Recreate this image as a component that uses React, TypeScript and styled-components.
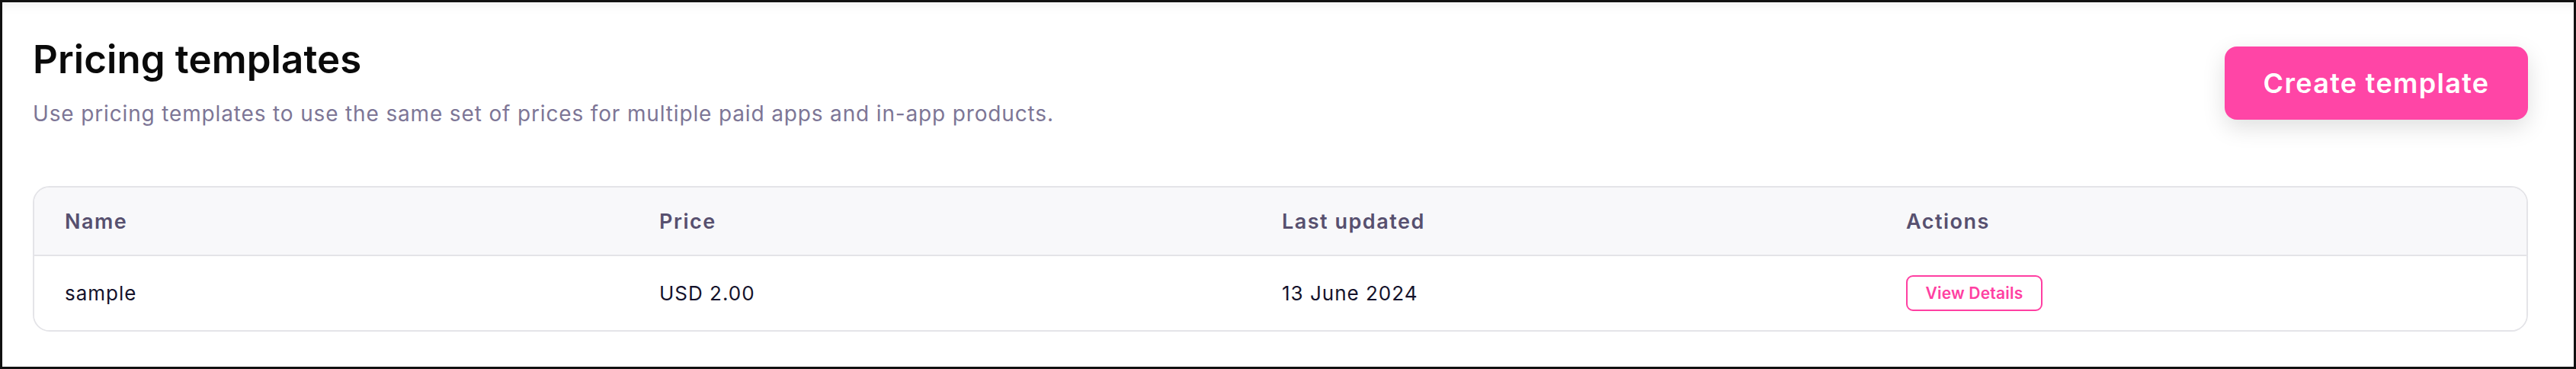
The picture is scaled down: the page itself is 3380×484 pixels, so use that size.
import React from "react";
import styled, { createGlobalStyle } from "styled-components";

const GlobalStyle = createGlobalStyle`
  html, body {
    margin: 0;
    padding: 0;
    background: #ffffff;
  }
  body {
    font-family: Inter, "Noto Sans", Roboto, sans-serif;
  }
  * { box-sizing: border-box; }
`;

const Frame = styled.div`
  width: 3380px;
  height: 484px;
  border: 3px solid #111111;
  background: #ffffff;
  box-shadow: inset 0 14px 18px -14px rgba(0, 0, 0, 0.09);
  padding: 45px 60px 0 40px;
  display: flex;
  flex-direction: column;
`;

const Header = styled.div`
  display: flex;
  justify-content: space-between;
  align-items: flex-start;
`;

const TitleBlock = styled.div`
  display: flex;
  flex-direction: column;
  gap: 23px;
`;

const Title = styled.h1`
  margin: 0;
  font-family: Inter, sans-serif;
  font-weight: 600;
  font-size: 51px;
  line-height: 60px;
  color: #0a0a0a;
  letter-spacing: 0.1px;
`;

const Subtitle = styled.p`
  margin: 0;
  font-family: Inter, sans-serif;
  font-weight: 400;
  font-size: 28px;
  line-height: 36px;
  color: #7d7696;
  letter-spacing: 0.85px;
`;

const PrimaryButton = styled.button`
  margin-top: 13px;
  width: 398px;
  height: 96px;
  border: none;
  border-radius: 16px;
  background: #ff45a6;
  color: #ffffff;
  font-family: Inter, sans-serif;
  font-weight: 600;
  font-size: 36px;
  letter-spacing: 1.3px;
  box-shadow: 0 10px 30px rgba(0, 0, 0, 0.13);
  cursor: pointer;
`;

const Table = styled.div`
  margin-top: 77px;
  border: 2px solid #e4e4e8;
  border-radius: 22px;
  overflow: hidden;
`;

const Row = styled.div<{ $head?: boolean }>`
  display: grid;
  grid-template-columns: 780px 817px 819px 1fr;
  align-items: center;
  height: ${(p) => (p.$head ? "90px" : "97px")};
  background: ${(p) => (p.$head ? "#f8f8fa" : "#ffffff")};
  border-bottom: ${(p) => (p.$head ? "2px solid #e4e4e8" : "none")};
`;

const HeadCell = styled.div`
  padding-left: 40px;
  font-family: Inter, sans-serif;
  font-weight: 600;
  font-size: 27px;
  color: #57506f;
  letter-spacing: 1.5px;
`;

const Cell = styled.div`
  padding-left: 40px;
  font-family: Inter, sans-serif;
  font-weight: 400;
  font-size: 26px;
  color: #14122b;
  letter-spacing: 1px;
`;

const OutlineButton = styled.button`
  width: 179px;
  height: 47px;
  border: 2px solid #ff3fa2;
  border-radius: 9px;
  background: #ffffff;
  color: #ff3fa2;
  font-family: Inter, sans-serif;
  font-weight: 600;
  font-size: 21px;
  letter-spacing: 0.2px;
  padding: 0;
  cursor: pointer;
`;

const columns = ["Name", "Price", "Last updated", "Actions"];

const rows = [{ name: "sample", price: "USD 2.00", updated: "13 June 2024" }];

export default function App() {
  return (
    <>
      <GlobalStyle />
      <Frame>
        <Header>
          <TitleBlock>
            <Title>Pricing templates</Title>
            <Subtitle>
              Use pricing templates to use the same set of prices for multiple paid apps and in-app products.
            </Subtitle>
          </TitleBlock>
          <PrimaryButton>Create template</PrimaryButton>
        </Header>
        <Table>
          <Row $head>
            {columns.map((c) => (
              <HeadCell key={c}>{c}</HeadCell>
            ))}
          </Row>
          {rows.map((r) => (
            <Row key={r.name}>
              <Cell>{r.name}</Cell>
              <Cell>{r.price}</Cell>
              <Cell>{r.updated}</Cell>
              <Cell>
                <OutlineButton>View Details</OutlineButton>
              </Cell>
            </Row>
          ))}
        </Table>
      </Frame>
    </>
  );
}
